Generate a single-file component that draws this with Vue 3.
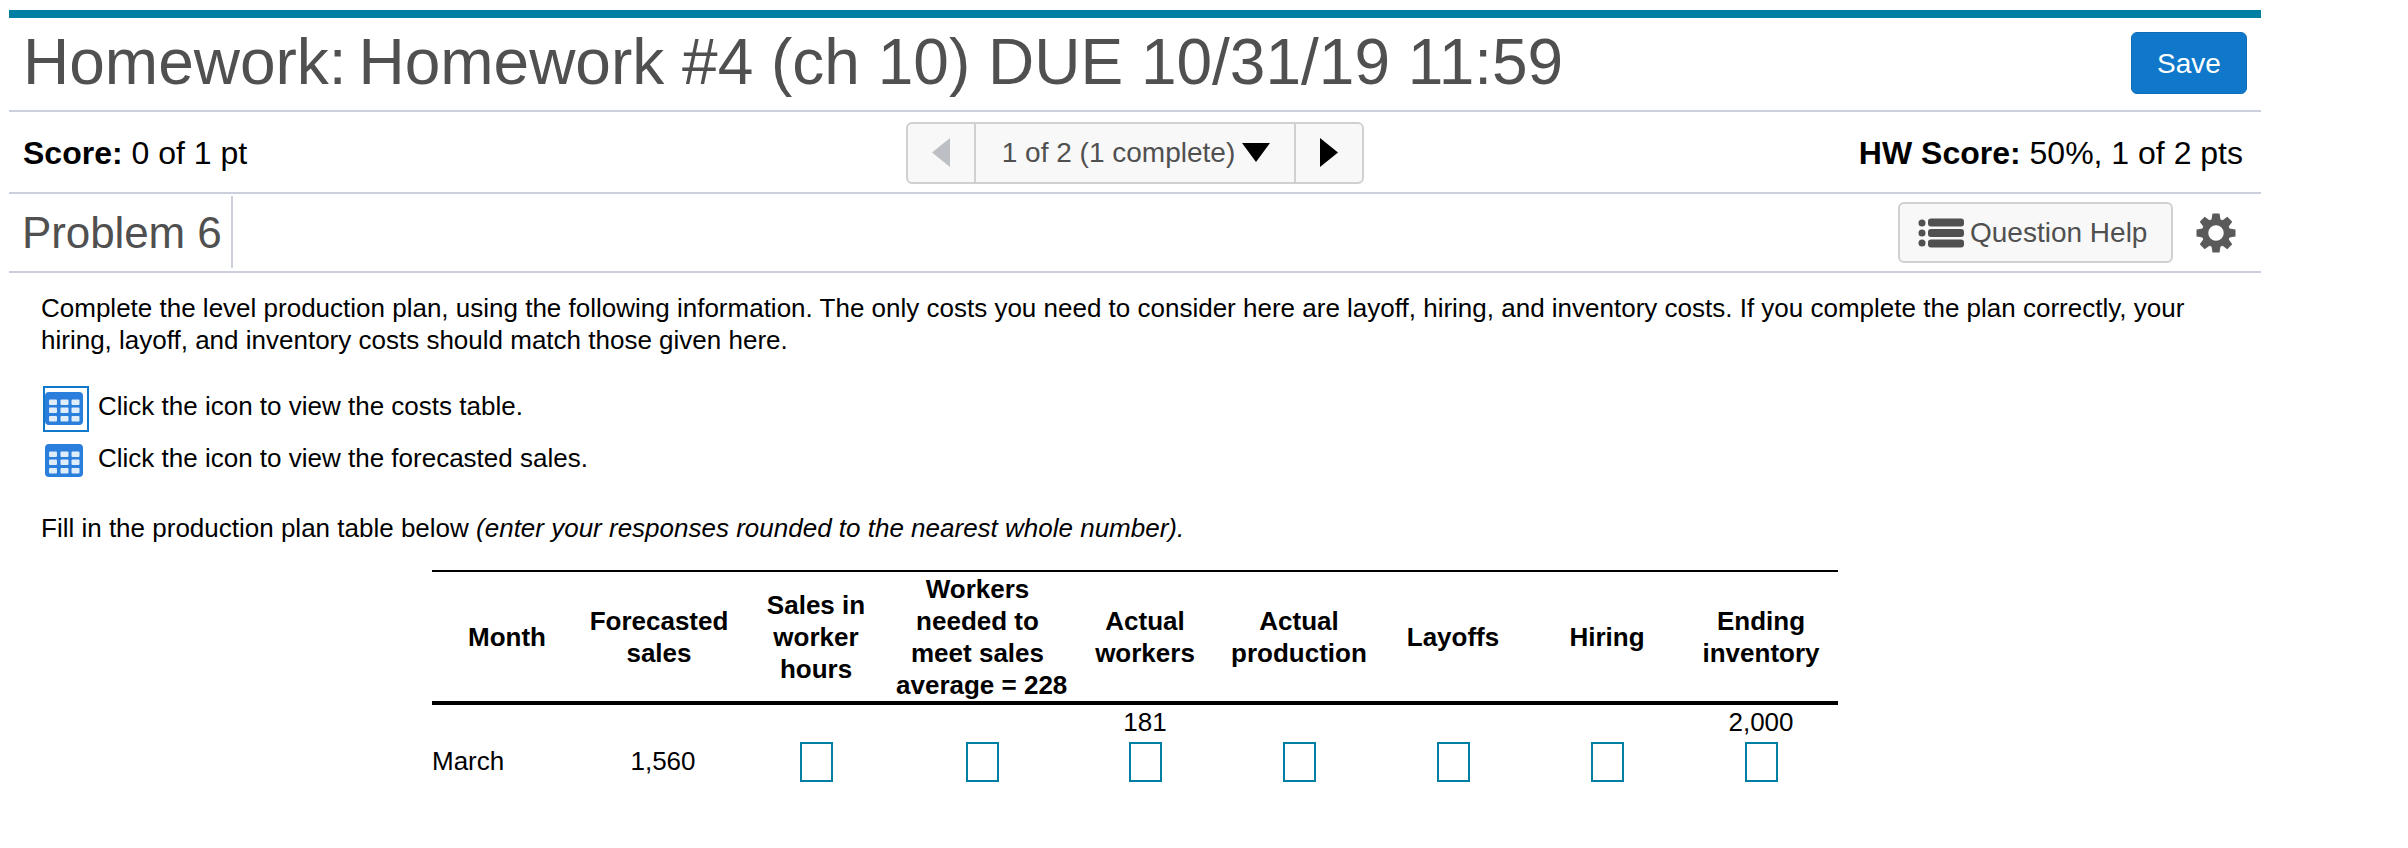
<script setup>
const headers = [
  ['Month'],
  ['Forecasted', 'sales'],
  ['Sales in', 'worker', 'hours'],
  ['Workers', 'needed to', 'meet sales', 'average = 228'],
  ['Actual', 'workers'],
  ['Actual', 'production'],
  ['Layoffs'],
  ['Hiring'],
  ['Ending', 'inventory']
]
const cols = [150, 154, 160, 172, 154, 154, 154, 154, 154]
const cells = [0, 1, 2, 3, 4, 5, 6]
const top = { 2: '181', 6: '2,000' }
const gridCells = [
  [0, 0], [1, 0], [2, 0],
  [0, 1], [1, 1], [2, 1],
  [0, 2], [1, 2], [2, 2]
]
const cellX = [4, 15.5, 26.5]
const cellY = [7.5, 15.5, 24]
const teeth = [0, 45, 90, 135, 180, 225, 270, 315]
</script>

<template>
  <div class="page">
    <div class="bar"></div>

    <header class="head">
      <h1 class="title"><span class="kind">Homework:</span> Homework #4 (ch 10) DUE 10/31/19 11:59</h1>
      <button class="save" type="button">Save</button>
    </header>

    <div class="score-row">
      <div class="score"><b>Score:</b> 0 of 1 pt</div>
      <div class="nav">
        <div class="nav-side">
          <svg width="18" height="29" viewBox="0 0 18 29"><path d="M18 0V29L0 14.500Z" fill="#bcbfc4" /></svg>
        </div>
        <div class="nav-mid">
          <span>1 of 2 (1 complete)</span>
          <svg width="28" height="19" viewBox="0 0 28 19"><path d="M0 0H28L14 19Z" fill="#000" /></svg>
        </div>
        <div class="nav-side">
          <svg width="18" height="29" viewBox="0 0 18 29"><path d="M0 0V29L18 14.500Z" fill="#000" /></svg>
        </div>
      </div>
      <div class="score score-right"><b>HW Score:</b> 50%, 1 of 2 pts</div>
    </div>

    <div class="problem-row">
      <h2 class="problem">Problem 6</h2>
      <div class="tools">
        <button class="help" type="button">
          <svg width="46" height="30" viewBox="0 0 46 30">
            <g fill="#505050">
              <circle cx="4" cy="5" r="3.500" />
              <circle cx="4" cy="15" r="3.500" />
              <circle cx="4" cy="25" r="3.500" />
              <rect x="10" y="0.500" width="36" height="8" rx="3" />
              <rect x="10" y="11" width="36" height="8" rx="3" />
              <rect x="10" y="21.500" width="36" height="8" rx="3" />
            </g>
          </svg>
          <span>Question Help</span>
        </button>
        <svg class="gear" width="40" height="40" viewBox="0 0 40 40">
          <g fill="#5a5a5a">
            <path
              v-for="a in teeth"
              :key="a"
              d="M16.500 0.500H23.500L25 10H15Z"
              :transform="`rotate(${a} 20 20)`"
            />
          </g>
          <circle cx="20" cy="20" r="11" fill="none" stroke="#5a5a5a" stroke-width="6.500" />
        </svg>
      </div>
    </div>

    <main class="content">
      <p class="intro">Complete the level production plan, using the following information. The only costs you need to consider here are layoff, hiring, and inventory costs. If you complete the plan correctly, your hiring, layoff, and inventory costs should match those given here.</p>

      <div v-for="(label, i) in ['costs table', 'forecasted sales']" :key="label" class="link-row">
        <span class="icon-box" :class="{ focused: i === 0 }">
          <svg width="38" height="33" viewBox="0 0 38 33">
            <rect width="38" height="33" rx="4" fill="#2b7fdc" />
            <template v-for="[c, r] in gridCells" :key="`${c}-${r}`">
              <rect :x="cellX[c]" :y="cellY[r]" width="8" height="5.500" rx="1" fill="#dfecfa" />
            </template>
          </svg>
        </span>
        <span class="link-text">Click the icon to view the {{ label }}.</span>
      </div>

      <p class="fill">Fill in the production plan table below <i>(enter your responses rounded to the nearest whole number).</i></p>

      <table class="plan">
        <colgroup>
          <col v-for="(w, i) in cols" :key="i" :style="{ width: w + 'px' }" />
        </colgroup>
        <thead>
          <tr>
            <th v-for="(h, i) in headers" :key="i" :class="{ 'th-shift': i === 3 }">
              <div v-for="line in h" :key="line">{{ line }}</div>
            </th>
          </tr>
        </thead>
        <tbody>
          <tr class="given">
            <td></td>
            <td></td>
            <td v-for="c in cells" :key="c">{{ top[c] }}</td>
          </tr>
          <tr class="entry">
            <td class="month">March</td>
            <td class="sales">1,560</td>
            <td v-for="c in cells" :key="c"><input class="answer" type="text" /></td>
          </tr>
        </tbody>
      </table>
    </main>
  </div>
</template>

<style>
html, body {
  background: #fff;
}
</style>

<style scoped>
.page {
  width: 2252px;
  margin: 10px 0 0 9px;
  font-family: "Liberation Sans", Arial, sans-serif;
  color: #000;
}
.bar {
  height: 8px;
  background: #007fa3;
}
.head {
  box-sizing: border-box;
  height: 94px;
  display: flex;
  justify-content: space-between;
  align-items: flex-start;
  padding: 13px 14px 0 14px;
  border-bottom: 2px solid #ccd0de;
}
.title {
  margin: 0;
  font-size: 64px;
  font-weight: 400;
  line-height: 62px;
  color: #505050;
  white-space: nowrap;
}
.kind {
  margin-right: -6px;
}
.save {
  width: 116px;
  height: 62px;
  margin-top: 1px;
  padding: 2px 0 0;
  border: 1px solid #0f6db8;
  border-radius: 6px;
  background: #0f78cb;
  color: #fff;
  font: 28px "Liberation Sans", Arial, sans-serif;
}
.score-row {
  box-sizing: border-box;
  height: 82px;
  display: grid;
  grid-template-columns: 1fr auto 1fr;
  align-items: center;
  padding: 0 18px 0 14px;
  border-bottom: 2px solid #ccd0de;
}
.score {
  padding-top: 2px;
  font-size: 32px;
  line-height: 40px;
  white-space: nowrap;
}
.score-right {
  text-align: right;
}
.nav {
  box-sizing: border-box;
  width: 458px;
  height: 62px;
  margin: 1px 0 0 4px;
  display: flex;
  border: 2px solid #d0d0d0;
  border-radius: 6px;
  background: #f8f8f8;
}
.nav-side {
  flex: 1;
  display: flex;
  align-items: center;
  justify-content: center;
}
.nav-mid {
  box-sizing: border-box;
  width: 322px;
  padding-left: 2px;
  display: flex;
  align-items: center;
  justify-content: center;
  gap: 7px;
  border-left: 2px solid #d0d0d0;
  border-right: 2px solid #d0d0d0;
  font-size: 28px;
  color: #505050;
}
.nav-mid span {
  padding-top: 1px;
}
.problem-row {
  box-sizing: border-box;
  height: 79px;
  display: flex;
  justify-content: space-between;
  align-items: flex-start;
  border-bottom: 2px solid #ccd0de;
}
.problem {
  box-sizing: border-box;
  height: 72px;
  margin: 2px 0 0;
  padding: 1px 9px 0 13px;
  border-right: 2px solid #ccd0de;
  font-size: 44px;
  font-weight: 400;
  line-height: 72px;
  color: #505050;
  letter-spacing: -0.1px;
}
.tools {
  display: flex;
  align-items: center;
  gap: 23px;
  margin: 8px 25px 0 0;
}
.help {
  box-sizing: border-box;
  width: 275px;
  height: 61px;
  display: flex;
  align-items: center;
  gap: 6px;
  padding: 0 0 0 18px;
  border: 2px solid #d0d0d0;
  border-radius: 6px;
  background: #f8f8f8;
  color: #505050;
  font: 28px "Liberation Sans", Arial, sans-serif;
}
.content {
  padding: 19px 0 0 32px;
  font-size: 26px;
  line-height: 32px;
}
.intro {
  width: 2190px;
  margin: 0 0 30px;
}
.link-row {
  display: flex;
  align-items: flex-start;
  gap: 9px;
  margin: 6px 0 0 2px;
}
.icon-box {
  box-sizing: border-box;
  width: 46px;
  height: 46px;
  padding-top: 4px;
  border: 2px solid transparent;
}
.icon-box svg {
  display: block;
}
.icon-box.focused {
  border-color: #0f78cb;
}
.link-text {
  padding-top: 4px;
}
.fill {
  margin: 28px 0 26px;
}
.plan {
  width: 1406px;
  margin-left: 391px;
  table-layout: fixed;
  border-collapse: collapse;
  border-top: 2px solid #000;
}
.plan th {
  height: 129px;
  padding: 0;
  border-bottom: 4px solid #000;
  font-weight: 700;
  text-align: center;
  vertical-align: middle;
  white-space: nowrap;
}
.plan .th-shift {
  padding-right: 9px;
}
.plan td {
  padding: 0;
  text-align: center;
}
.given td {
  height: 35px;
  vertical-align: top;
  padding-top: 1px;
}
.entry td {
  height: 40px;
  vertical-align: middle;
}
.plan .month,
.plan .sales {
  padding-bottom: 2px;
}
.plan .month {
  text-align: left;
}
.plan .sales {
  padding-left: 8px;
}
.answer {
  box-sizing: border-box;
  display: block;
  width: 33px;
  height: 40px;
  margin: 0 auto;
  padding: 0;
  border: 2px solid #007fa3;
  border-radius: 0;
  background: #fff;
}
</style>
